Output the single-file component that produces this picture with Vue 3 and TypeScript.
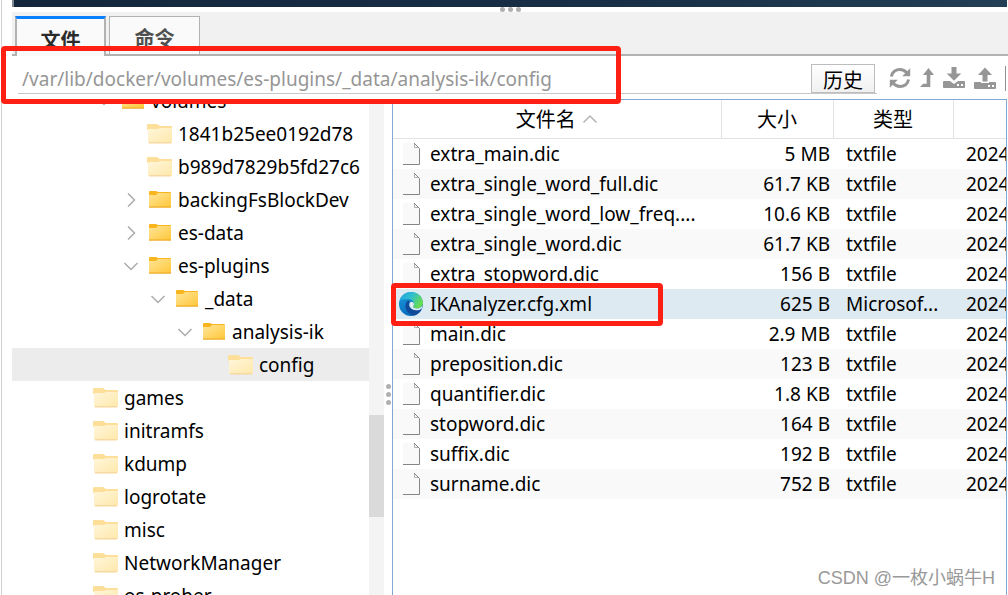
<script setup lang="ts">
import { ref } from 'vue'

interface TreeNode {
  name: string
  level: number
  state: 'open' | 'closed' | 'leaf'
}
interface FileRow {
  name: string
  size: string
  type: string
  date: string
}

const path = ref('/var/lib/docker/volumes/es-plugins/_data/analysis-ik/config')
const activeFolder = ref('config')
const activeFile = ref('IKAnalyzer.cfg.xml')

const tree: TreeNode[] = [
  { name: 'volumes', level: 1, state: 'open' },
  { name: '1841b25ee0192d78', level: 2, state: 'leaf' },
  { name: 'b989d7829b5fd27c6', level: 2, state: 'leaf' },
  { name: 'backingFsBlockDev', level: 2, state: 'closed' },
  { name: 'es-data', level: 2, state: 'closed' },
  { name: 'es-plugins', level: 2, state: 'open' },
  { name: '_data', level: 3, state: 'open' },
  { name: 'analysis-ik', level: 4, state: 'open' },
  { name: 'config', level: 5, state: 'leaf' },
  { name: 'games', level: 0, state: 'leaf' },
  { name: 'initramfs', level: 0, state: 'leaf' },
  { name: 'kdump', level: 0, state: 'leaf' },
  { name: 'logrotate', level: 0, state: 'leaf' },
  { name: 'misc', level: 0, state: 'leaf' },
  { name: 'NetworkManager', level: 0, state: 'leaf' },
  { name: 'os-prober', level: 0, state: 'leaf' },
]

const files: FileRow[] = [
  { name: 'extra_main.dic', size: '5 MB', type: 'txtfile', date: '2024' },
  { name: 'extra_single_word_full.dic', size: '61.7 KB', type: 'txtfile', date: '2024' },
  { name: 'extra_single_word_low_freq....', size: '10.6 KB', type: 'txtfile', date: '2024' },
  { name: 'extra_single_word.dic', size: '61.7 KB', type: 'txtfile', date: '2024' },
  { name: 'extra_stopword.dic', size: '156 B', type: 'txtfile', date: '2024' },
  { name: 'IKAnalyzer.cfg.xml', size: '625 B', type: 'Microsof...', date: '2024' },
  { name: 'main.dic', size: '2.9 MB', type: 'txtfile', date: '2024' },
  { name: 'preposition.dic', size: '123 B', type: 'txtfile', date: '2024' },
  { name: 'quantifier.dic', size: '1.8 KB', type: 'txtfile', date: '2024' },
  { name: 'stopword.dic', size: '164 B', type: 'txtfile', date: '2024' },
  { name: 'suffix.dic', size: '192 B', type: 'txtfile', date: '2024' },
  { name: 'surname.dic', size: '752 B', type: 'txtfile', date: '2024' },
]
</script>

<template>
  <div class="window">
    <svg class="defs" width="0" height="0" aria-hidden="true">
      <defs>
        <linearGradient id="gold" x1="0" y1="0" x2="1" y2="1">
          <stop offset="0" stop-color="#ffe599" /><stop offset="1" stop-color="#fec73a" />
        </linearGradient>
        <linearGradient id="pale" x1="0" y1="0" x2="1" y2="1">
          <stop offset="0" stop-color="#fff6da" /><stop offset="1" stop-color="#fee8ab" />
        </linearGradient>
        <linearGradient id="edgeTop" x1="0" y1="0" x2="1" y2="0.5">
          <stop offset="0" stop-color="#1c9fdd" /><stop offset="0.5" stop-color="#2fbfd0" /><stop offset="1" stop-color="#68dc50" />
        </linearGradient>
        <linearGradient id="edgeLeft" x1="0" y1="0" x2="0.5" y2="1">
          <stop offset="0" stop-color="#1b9de2" /><stop offset="1" stop-color="#0868b8" />
        </linearGradient>
      </defs>
    </svg>

    <div class="terminal"></div>
    <div class="grip grip-h"><i></i><i></i><i></i></div>

    <nav class="tabs">
      <button class="tab active" type="button">文件</button>
      <button class="tab" type="button">命令</button>
    </nav>

    <div class="pathbar">
      <div class="pathline">
        <input v-model="path" class="path" type="text" aria-label="路径" spellcheck="false" />
        <button class="history" type="button">历史</button>
      </div>
      <div class="tools">
        <button type="button" aria-label="刷新">
          <svg width="22" height="22" viewBox="0 0 22 22" fill="none" stroke="#969696" stroke-width="3">
            <path d="M2.4 9.4C3.2 5 6.8 2.5 11 2.5c3 0 5 1.2 6.8 3.2" />
            <path d="M19.6 12.6c-.8 4.4-4.4 6.900-8.600 6.900-3 0-5-1.200-6.800-3.200" />
            <path d="M21.200 1.200v8h-8zM.8 20.800v-8h8z" fill="#969696" stroke="none" />
          </svg>
        </button>
        <button type="button" aria-label="上级目录">
          <svg width="14" height="22" viewBox="0 0 14 22" fill="#969696">
            <path d="M8.500 1 14 8h-3.700v12H0l3.200-3.200h3.500V8H3z" />
          </svg>
        </button>
        <button type="button" aria-label="下载">
          <svg width="22" height="22" viewBox="0 0 22 22" fill="#969696">
            <path d="M8.500 0h5v6.500h4.800L11 13.800 3.700 6.500h4.800z" />
            <path fill-rule="evenodd" d="M1 14h6l4 3 4-3h6q1 0 1 1v5q0 1-1 1H1q-1 0-1-1v-5q0-1 1-1zM14 17v2h2v-2zM18 17v2h2v-2z" />
          </svg>
        </button>
        <button type="button" aria-label="上传">
          <svg width="22" height="22" viewBox="0 0 22 22" fill="#969696">
            <path d="M11 0.500 18 8h-4.500v6.500h-5V8H4z" />
            <path fill-rule="evenodd" d="M1 15h6v1h8v-1h6q1 0 1 1v5q0 1-1 1H1q-1 0-1-1v-5q0-1 1-1zM14 18v2h2v-2zM18 18v2h2v-2z" />
          </svg>
        </button>
      </div>
      <span class="divider"></span>
    </div>

    <main class="panes">
      <div class="tree">
        <ul>
          <li
            v-for="node in tree"
            :key="node.name"
            :class="['lv' + node.level, { selected: node.name === activeFolder }]"
            @click="activeFolder = node.name"
          >
            <svg v-if="node.state === 'leaf'" class="toggle" width="16" height="16"></svg>
            <svg v-else class="toggle" width="16" height="16" viewBox="0 0 16 16" fill="none" stroke="#ababab" stroke-width="1.500">
              <path v-if="node.state === 'open'" d="M1.500 5 8 11.500 14.500 5" />
              <path v-else d="M5 1.500 11.500 8 5 14.500" />
            </svg>
            <svg v-if="node.state === 'leaf'" class="folder" width="26" height="20" viewBox="0 0 26 20">
              <path d="M0 1q0-1 1-1h9l3 2h11q1 0 1 1v3H0z" fill="#fddf99" />
              <path d="M1 5h10l2-1h12v14q0 1-1 1H2q-1 0-1-1z" fill="url(#pale)" />
              <path d="M2 18h22v1.500H2z" fill="#f7d9a0" />
            </svg>
            <svg v-else class="folder" width="26" height="20" viewBox="0 0 26 20">
              <path d="M2 2q0-1 1-1h6l2 1h12q1 0 1 1v3H2z" fill="#f8b51e" />
              <path d="M2 5h7l2-2h13v14H2z" fill="url(#gold)" />
              <path d="M2 16.500h22v1.200H2z" fill="#efa91d" />
            </svg>
            <span>{{ node.name }}</span>
          </li>
        </ul>
      </div>
      <div class="scrollbar"><div class="thumb"></div></div>
      <div class="grip grip-v"><i></i><i></i><i></i></div>

      <div class="list">
        <table>
          <colgroup>
            <col /><col class="c-size" /><col class="c-type" /><col class="c-date" />
          </colgroup>
          <thead>
            <tr>
              <th scope="col">
                <span>文件名</span>
                <svg class="sort" width="16" height="10" viewBox="0 0 16 10" fill="none" stroke="#b5b5b5" stroke-width="1.500">
                  <path d="M1.500 8.500 8 2l6.500 6.500" />
                </svg>
              </th>
              <th scope="col">大小</th>
              <th scope="col">类型</th>
              <th scope="col"></th>
            </tr>
          </thead>
          <tbody>
            <tr v-for="file in files" :key="file.name" :class="{ selected: file.name === activeFile }" @click="activeFile = file.name">
              <td>
                <div class="name">
                  <svg v-if="file.name.endsWith('.xml')" width="24" height="24" viewBox="0 0 24 24">
                    <circle cx="12" cy="12" r="12" fill="url(#edgeLeft)" />
                    <path d="M.7 8.300C2.400 3.300 6.800 0 12 0c6.600 0 12 4.900 12 10.800 0 3.400-2.700 5.700-6 5.700-2.500 0-4-.9-4-1.900 0-.7 1-1.100 1-2.900C15 9.300 12.600 7.300 9.300 7.300 6 7.300 2.600 7 .7 8.300z" fill="url(#edgeTop)" />
                    <path d="M9.300 8.200c-2.100 1.600-3.200 4-2.700 6.900.7 4.800 4.400 8.500 9.200 8.200 3-1.200 5.100-3.200 6.300-5.300.3-.6-.3-.9-.8-.6-5 2.400-12-.1-11.100-5.800.2-1.300.7-2.500-.9-3.400z" fill="#114a98" />
                    <path d="M11.200 10.300c-1.600 1.800-.8 5.200 1.700 6.800 3.100 1.900 7 1.700 10.100-.9l.5-3c-1.100 2.100-3.200 3.300-5.500 3.300-2.500 0-4-.9-4-1.900 0-.7 1-1.100 1-2.700-.5-2.200-2.500-2.900-3.800-1.600z" fill="#dfeaf2" />
                  </svg>
                  <svg v-else width="24" height="24" viewBox="0 0 24 24">
                    <path d="M4 1h11l6 6v15H4z" fill="#f9f9f9" />
                    <path d="M15.500 1v4.500H20" fill="none" stroke="#b0b0b0" />
                    <path d="m15 1 5.500 5.500V22.500H4" fill="none" stroke="#858585" />
                  </svg>
                  <span>{{ file.name }}</span>
                </div>
              </td>
              <td class="size">{{ file.size }}</td>
              <td>{{ file.type }}</td>
              <td>{{ file.date }}</td>
            </tr>
          </tbody>
        </table>
        <div class="watermark">CSDN @一枚小蜗牛H</div>
      </div>
    </main>

    <div class="mark mark-path"></div>
    <div class="mark mark-file"></div>
  </div>
</template>

<style>
body {
  margin: 0;
  overflow: hidden;
}
</style>

<style scoped>
* {
  box-sizing: border-box;
}
.window {
  position: relative;
  display: flex;
  flex-direction: column;
  height: 100vh;
  padding-left: 12px;
  overflow: hidden;
  background: #fff linear-gradient(#d0d0d0, #d0d0d0) 1px 0 / 1px 100% no-repeat;
  color: #000;
  font: 19px "Noto Sans", "Noto Sans CJK SC", sans-serif;
}
.defs {
  position: absolute;
}
button {
  padding: 0;
  border: 0;
  background: none;
  color: inherit;
  font: inherit;
}
.terminal {
  flex: none;
  height: 7px;
  margin-right: 1px;
  border-left: 2px solid #7d8790;
  background: linear-gradient(90deg, #13263c, #182f45 60%, #233f55);
}
.grip {
  display: flex;
  align-items: center;
  justify-content: center;
  flex: none;
  gap: 3px;
}
.grip i {
  width: 5px;
  height: 5px;
  border-radius: 50%;
  background: #b0b0b0;
}
.grip-h {
  height: 5px;
}
.tabs {
  display: flex;
  flex: none;
  gap: 3px;
  height: 44px;
  padding: 4px 3px 0;
  border-bottom: 2px solid #b2b2b2;
  background: #f1f1f1;
}
.tab {
  width: 91px;
  height: 40px;
  padding-top: 4px;
  border: 1px solid #b2b2b2;
  border-width: 1px 1px 2px;
  background: #fafafa;
  color: #505050;
  font-size: 20px;
  font-weight: 700;
}
.tab.active {
  border-width: 3px 2px 0;
  border-top-color: #0a80ff;
  color: #2b2b2b;
}
.pathbar {
  display: flex;
  align-items: flex-start;
  flex: none;
  height: 43px;
  padding: 8px 2px 0 6px;
}
.pathline {
  display: flex;
  flex: 1;
  height: 30px;
  padding-right: 2px;
  border-bottom: 1px solid #c8c8c8;
}
.path {
  flex: 1;
  min-width: 0;
  padding: 0 4px;
  border: 0;
  outline: 0;
  background: none;
  color: #969696;
  font: inherit;
}
.history {
  width: 64px;
  border: 1px solid #bdbdbd;
  background: linear-gradient(#fff, #f0f0f0);
  font-size: 20px;
}
.tools {
  display: flex;
  gap: 9px;
  padding: 3px 9px 0 12px;
}
.tools button,
.tools svg {
  display: block;
}
.divider {
  width: 1px;
  height: 25px;
  margin-top: 2px;
  background: #909090;
}
.panes {
  display: flex;
  flex: 1;
  min-height: 0;
}
.tree {
  flex: 0 0 357px;
  overflow: hidden;
}
.tree ul {
  margin: -15px 0 0;
  padding: 0;
  list-style: none;
}
.tree li {
  display: flex;
  align-items: center;
  height: 33px;
  white-space: nowrap;
}
.tree li.selected {
  background: #ececec;
}
.lv0 { padding-left: 57px; }
.lv1 { padding-left: 84px; }
.lv2 { padding-left: 111px; }
.lv3 { padding-left: 138px; }
.lv4 { padding-left: 165px; }
.lv5 { padding-left: 192px; }
.toggle {
  flex: none;
  margin-right: 8px;
}
.folder {
  flex: none;
  margin-right: 5px;
}
.scrollbar {
  flex: 0 0 15px;
  padding-top: 316px;
  background: #f4f4f4;
}
.thumb {
  height: 102px;
  background: #dadada;
}
.grip-v {
  flex-direction: column;
  width: 8px;
  padding-bottom: 0;
}
.grip-v {
  justify-content: flex-start;
  padding-top: 285px;
}
.list {
  position: relative;
  flex: 1;
  min-width: 0;
  overflow: hidden;
  margin-right: 1px;
  border: 1px solid #7fa8d2;
  border-width: 1px 1px 0;
}
table {
  width: 100%;
  table-layout: fixed;
  border-collapse: collapse;
}
.c-size { width: 112px; }
.c-type { width: 120px; }
.c-date { width: 53px; }
th {
  height: 38px;
  padding: 0;
  border-right: 1px solid #e3e3e3;
  border-bottom: 1px solid #e3e3e3;
  font-size: 20px;
  font-weight: 400;
}
th:last-child {
  border-right: 0;
}
.sort {
  margin-left: 6px;
  vertical-align: 3px;
}
td {
  height: 30px;
  padding: 0 0 0 13px;
  overflow: hidden;
  line-height: 30px;
  white-space: nowrap;
}
td:first-child {
  padding-left: 6px;
}
td.size {
  padding: 0 3px 0 0;
  text-align: right;
}
tbody tr:nth-child(even) {
  background: #f9f9f9;
}
tbody tr.selected {
  background: #deeaf2;
}
.name {
  display: flex;
  align-items: center;
  gap: 7px;
}
.name svg {
  flex: none;
}
.watermark {
  position: absolute;
  right: 11px;
  bottom: 6px;
  color: #999;
  font: 18px "Liberation Sans", "Noto Sans CJK SC", sans-serif;
}
.mark {
  position: absolute;
  border: 5px solid #fe2013;
  border-radius: 4px;
  pointer-events: none;
}
.mark-path {
  top: 46px;
  left: 1px;
  width: 620px;
  height: 58px;
}
.mark-file {
  top: 283px;
  left: 391px;
  width: 272px;
  height: 43px;
}
</style>
